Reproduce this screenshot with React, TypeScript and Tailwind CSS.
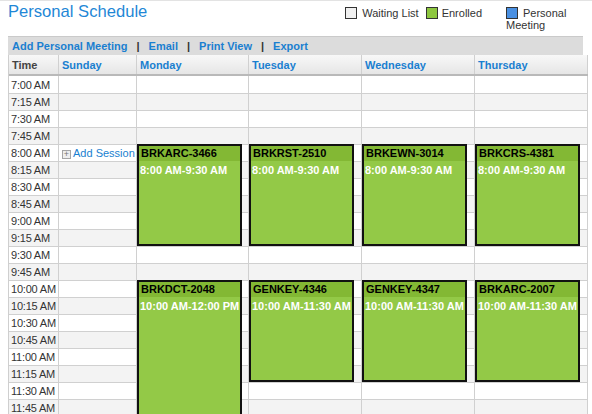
import React from 'react';

const times = [
  '7:00 AM', '7:15 AM', '7:30 AM', '7:45 AM',
  '8:00 AM', '8:15 AM', '8:30 AM', '8:45 AM',
  '9:00 AM', '9:15 AM', '9:30 AM', '9:45 AM',
  '10:00 AM', '10:15 AM', '10:30 AM', '10:45 AM',
  '11:00 AM', '11:15 AM', '11:30 AM', '11:45 AM',
];

const days = ['Sunday', 'Monday', 'Tuesday', 'Wednesday', 'Thursday'];

const cols = 'grid grid-cols-[50px_78px_112px_113px_113px_113px]';

const sessions = [
  { code: 'BRKARC-3466', time: '8:00 AM-9:30 AM', pos: 'col-start-3 row-start-5 row-span-6' },
  { code: 'BRKRST-2510', time: '8:00 AM-9:30 AM', pos: 'col-start-4 row-start-5 row-span-6' },
  { code: 'BRKEWN-3014', time: '8:00 AM-9:30 AM', pos: 'col-start-5 row-start-5 row-span-6' },
  { code: 'BRKCRS-4381', time: '8:00 AM-9:30 AM', pos: 'col-start-6 row-start-5 row-span-6' },
  { code: 'BRKDCT-2048', time: '10:00 AM-12:00 PM', pos: 'col-start-3 row-start-13 row-span-8' },
  { code: 'GENKEY-4346', time: '10:00 AM-11:30 AM', pos: 'col-start-4 row-start-13 row-span-6' },
  { code: 'GENKEY-4347', time: '10:00 AM-11:30 AM', pos: 'col-start-5 row-start-13 row-span-6' },
  { code: 'BRKARC-2007', time: '10:00 AM-11:30 AM', pos: 'col-start-6 row-start-13 row-span-6' },
];

const Legend = () => (
  <div className="flex items-start pt-[6px] text-[11px] leading-[12px] text-[#333]">
    <div className="flex items-center">
      <span className="w-[12px] h-[12px] border border-[#333] bg-[#f0f0f0]" />
      <span className="ml-[5px]">Waiting List</span>
    </div>
    <div className="flex items-center ml-[7px]">
      <span className="w-[12px] h-[12px] border border-[#333] bg-[#8dc63f]" />
      <span className="ml-[4px]">Enrolled</span>
    </div>
    <div className="ml-[24px] w-[66px]">
      <span className="inline-block align-[-2px] w-[12px] h-[12px] border border-[#333] bg-[#4a90e2] mr-[5px]" />
      Personal Meeting
    </div>
  </div>
);

const Session = ({ code, time, pos }: { code: string; time: string; pos: string }) => (
  <div className={`${pos} w-[105px] border-2 border-[#111] bg-[#93c947] flex flex-col overflow-hidden`}>
    <div className="h-[15px] bg-[#83b834] px-[2px] text-[11px] leading-[15px] font-bold text-black">{code}</div>
    <div className="px-[1px] pt-[2px] text-[11px] leading-[14px] font-bold text-white whitespace-nowrap">{time}</div>
  </div>
);

export default function App() {
  return (
    <div className="h-[414px] overflow-hidden bg-white border-t border-[#e3e3e3] font-['Liberation_Sans',Arial,sans-serif]">
      <div className="flex justify-between pl-[8px] pr-[20px] h-[35px]">
        <h1 className="text-[16.6px] leading-[20px] pt-[1px] text-[#1f87d6]">Personal Schedule</h1>
        <Legend />
      </div>

      <div className="ml-[8px] w-[575px] h-[19px] bg-[#dcdcdc] border-t border-[#cacaca] flex items-center pl-[4px] text-[11px] font-bold">
        <a className="text-[#1a7fd0]">Add Personal Meeting</a>
        <span className="mx-[9px] text-[#333]">|</span>
        <a className="text-[#1a7fd0]">Email</a>
        <span className="mx-[9px] text-[#333]">|</span>
        <a className="text-[#1a7fd0]">Print View</a>
        <span className="mx-[9px] text-[#333]">|</span>
        <a className="text-[#1a7fd0]">Export</a>
      </div>

      <div className="ml-[8px] w-[580px] border-l border-[#cfcfcf]">
        <div className={`${cols} h-[21px] bg-gradient-to-b from-[#f8f8f8] to-[#e6e6e6] border-b-2 border-[#b9b9b9] text-[11px] font-bold`}>
          <div className="border-r border-[#d0d0d0] pl-[3px] pt-[1px] leading-[18px] text-[#444]">Time</div>
          {days.map((d) => (
            <div key={d} className="border-r border-[#d0d0d0] pl-[3px] pt-[1px] leading-[18px] text-[#1a7fd0]">{d}</div>
          ))}
        </div>

        <div className="relative">
          {times.map((t, i) => (
            <div key={t} className={`${cols} h-[17px] ${i % 2 ? 'bg-[#f3f3f3]' : 'bg-white'}`}>
              <div className="border-r border-b border-[#d0d0d0] pl-[2px] pt-[1px] text-[11px] leading-[16px] tracking-[-0.2px] whitespace-nowrap text-[#333]">{t}</div>
              <div className="border-r border-b border-[#d0d0d0] flex items-center pl-[3px] pt-[1px] whitespace-nowrap">
                {t === '8:00 AM' && (
                  <>
                    <span className="shrink-0 w-[9px] h-[9px] mt-[3px] border border-[#a5a5a5] bg-[#eee] flex items-center justify-center text-[9px] leading-[7px] text-[#777]">+</span>
                    <span className="ml-[2px] text-[11px] leading-[16px] text-[#1a7fd0]">Add Session</span>
                  </>
                )}
              </div>
              <div className="border-r border-b border-[#d0d0d0]" />
              <div className="border-r border-b border-[#d0d0d0]" />
              <div className="border-r border-b border-[#d0d0d0]" />
              <div className="border-r border-b border-[#d0d0d0]" />
            </div>
          ))}

          <div className={`absolute inset-0 ${cols} grid-rows-[repeat(20,17px)] pointer-events-none`}>
            {sessions.map((s) => (
              <Session key={s.code} {...s} />
            ))}
          </div>
        </div>
      </div>
    </div>
  );
}
